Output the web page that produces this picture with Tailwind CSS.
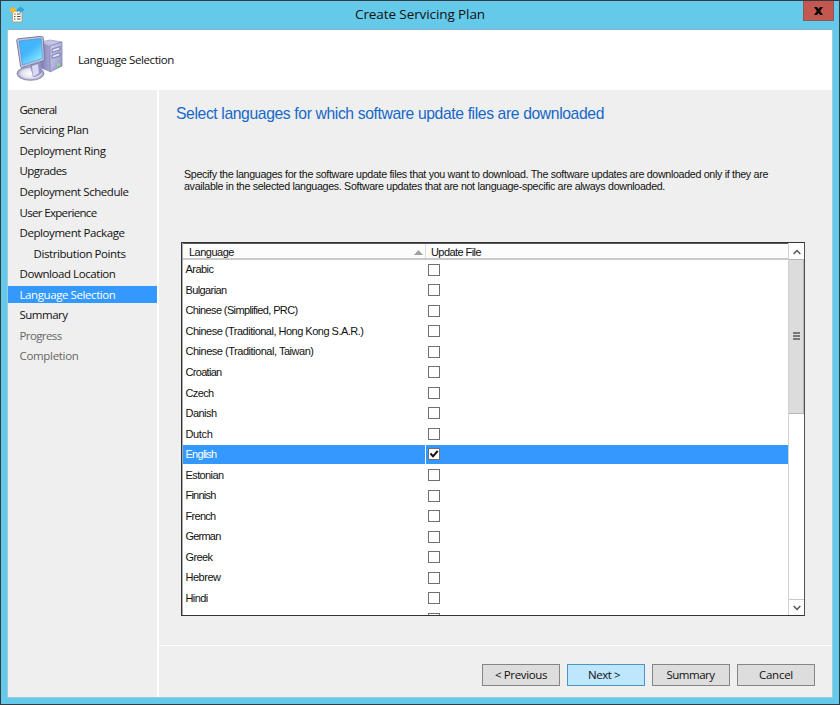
<!DOCTYPE html>
<html lang="en">
<head>
<meta charset="utf-8">
<title>Create Servicing Plan</title>
<script src="https://cdn.jsdelivr.net/npm/@tailwindcss/browser@4"></script>
</head>
<body class="w-[840px] h-[705px] overflow-hidden bg-[#333b45] font-['Open_Sans','Noto_Sans',sans-serif] text-[11.5px] text-[#111] whitespace-nowrap">
<div class="w-[840px] h-[705px] border border-[#353b43] bg-[#65c9e9] flex flex-col">
  <header class="h-[28px] shrink-0 flex items-start relative">
    <svg class="ml-[8px] mt-[5px]" width="17" height="17" viewBox="0 0 17 17">
      <path d="M3.500 4.500h9.500v11.500h-9.500z" fill="#fffaf0" stroke="#a8977c" stroke-width=".8"/>
      <path d="M5 8h1.500M5 10.500h1.500M5 13h1.500M8 8h3.500M8 10.500h3.500M8 13h3.500" stroke="#555" stroke-width="1.200"/>
      <path d="M3.800 0l1 2.500L7.500 1.800 6.200 4l1.600 2-2.700-.3L3.800 8 2.700 5.600 0 5.800 1.600 3.800.4 1.500l2.500.8z" fill="#f5b52c"/>
      <path d="M8 6c.3-3 1.500-4 3-4V.8L15 3.800l-4 3V5C10 4.700 9 5 8 6z" fill="#30a9dd" stroke="#2488bd" stroke-width=".5"/>
    </svg>
    <div class="absolute left-[354px] top-[3px] leading-[20px] text-[13.5px]"><span data-w="130">Create Servicing Plan</span></div>
    <div class="absolute left-[802px] top-0 w-[31px] h-[20px] border border-t-0 border-[#87595b] bg-[#c4574f] flex items-center justify-center">
      <svg width="9" height="8" viewBox="0 0 9 8"><path d="M0 0h3l1.500 2L6 0h3L6.200 4 9 8H6L4.500 6 3 8H0l2.800-4z" fill="#080808"/></svg>
    </div>
  </header>
  <main class="ml-[6px] w-[826px] h-[669px] shrink-0 border-l border-t border-r border-b border-[#9ccbdc] border-t-[#83b3d2] bg-[#efefef] flex flex-col">
    <div class="h-[60px] shrink-0 bg-white flex items-center">
      <svg class="ml-[8px] mt-[2px]" width="50" height="50" viewBox="0 0 50 50">
        <defs>
          <linearGradient id="scr" x1="0" y1="0" x2=".7" y2="1"><stop offset="0" stop-color="#42b4ff"/><stop offset=".5" stop-color="#42b5fb"/><stop offset="1" stop-color="#8bebff"/></linearGradient>
          <linearGradient id="front" x1="0" y1="0" x2="1" y2="1"><stop offset="0" stop-color="#d9d8f4"/><stop offset="1" stop-color="#8f8fc4"/></linearGradient>
          <linearGradient id="side" x1="0" y1="0" x2="1" y2="0"><stop offset="0" stop-color="#7778ad"/><stop offset="1" stop-color="#a9a9d8"/></linearGradient>
          <radialGradient id="foot"><stop offset="0" stop-color="#fff"/><stop offset=".7" stop-color="#dedfef"/><stop offset="1" stop-color="#9293b6"/></radialGradient>
        </defs>
        <path d="M25 6L34 4 46 6 35 10z" fill="#c4c5e8" stroke="#8989b5" stroke-width=".6"/>
        <path d="M24 6L34 10v26l-10-4z" fill="url(#side)"/>
        <path d="M34 10L46 6v24L34 36z" fill="url(#front)" stroke="#7778aa" stroke-width=".7"/>
        <path d="M36 13l8-2.500v3.500l-8 2.500zM36 19l8-2.500v3.500l-8 2.500z" fill="#b9b9e2" stroke="#777aab" stroke-width=".8"/>
        <path d="M37 14.500l6-2M37 20.500l6-2" stroke="#fff" stroke-width=".9"/>
        <circle cx="42.500" cy="28.500" r="1.600" fill="#83e957"/>
        <ellipse cx="14.500" cy="37.500" rx="13.500" ry="6.800" fill="url(#foot)" stroke="#8b8bab" stroke-width=".9"/>
        <path d="M14 29l11-3 1 10c-2 3-6 5-9 5z" fill="#8f91c5"/>
        <path d="M16 30l6-2 1 9c-2 2-4 3-6 3z" fill="#d8d9f1"/>
        <path d="M.7 4.500Q.7 3 2.200 2.800L25 .3Q27 .2 27.200 1.700L28.500 23q0 1.500-1.500 2L6.500 31.500Q5 31.800 4.600 30.500z" fill="#bfc2dc" stroke="#70739b" stroke-width=".9"/>
        <path d="M3 5L25 2.500 26.500 22.500 6.500 29z" fill="url(#scr)" stroke="#4a8bd2" stroke-width=".6"/>
      </svg>
      <div class="ml-[12px] -mt-px"><span data-w="96">Language Selection</span></div>
    </div>
    <div class="flex flex-1 min-h-0">
      <nav id="nav" class="w-[151px] shrink-0 border-r-2 border-white pt-[9px]"></nav>
      <section class="flex-1 min-w-0 flex flex-col font-['Liberation_Sans',Arial,sans-serif]">
        <div class="h-[556px] shrink-0 border-b border-white">
          <h1 class="pt-[14px] pl-[17px] text-[15.7px] leading-[20px] text-[#1668c8]"><span data-w="428">Select languages for which software update files are downloaded</span></h1>
          <div class="mt-[44px] pl-[25px] text-[10.7px] leading-[12px]">
            <div><span data-w="584">Specify the languages for the software update files that you want to download. The software updates are downloaded only if they are</span></div>
            <div><span data-w="481">available in the selected languages. Software updates that are not language-specific are always downloaded.</span></div>
          </div>
          <div class="mt-[50px] ml-[22px] w-[624px] h-[374px] border border-[#333] border-r-[#505050] shadow-[inset_1px_1px_0_#aaa] bg-white flex overflow-hidden">
            <div class="w-[606px] h-full pl-px overflow-hidden">
              <div class="h-[17px] bg-[#fcfcfc] border-t border-[#555] border-b-2 border-b-[#c9c9c9] flex text-[11px] leading-[17px]">
                <div class="w-[243px] border-r border-[#ddd] pl-[6px] pr-[2px] flex items-start justify-between"><span data-w="45">Language</span>
                  <svg class="mt-[6px]" width="9" height="5" viewBox="0 0 9 5"><path d="M4.500 0L9 5H0z" fill="#a0a0a0"/></svg>
                </div>
                <div class="pl-[5px]"><span data-w="50">Update File</span></div>
              </div>
              <div id="rows"></div>
            </div>
            <div class="w-[16px] h-full border-l border-[#d2d2d2] bg-white flex flex-col">
              <div class="h-[16px] shrink-0 flex items-center justify-center"><svg class="mt-[2px]" width="8" height="6" viewBox="0 0 8 6"><path d="M.7 5L4 1.500 7.300 5" fill="none" stroke="#555" stroke-width="1.500"/></svg></div>
              <div class="h-[155px] shrink-0 bg-[#dcdcdc] border border-l-0 border-[#b5b5b5] flex flex-col items-center justify-center gap-px pb-[2px]">
                <i class="block w-[7px] h-[2px] bg-[#777]"></i><i class="block w-[7px] h-[2px] bg-[#777]"></i><i class="block w-[7px] h-[2px] bg-[#777]"></i>
              </div>
              <div class="flex-1"></div>
              <div class="h-[16px] shrink-0 border-t border-[#c8c8c8] flex items-center justify-center"><svg width="8" height="6" viewBox="0 0 8 6"><path d="M.7 1L4 4.500 7.300 1" fill="none" stroke="#555" stroke-width="1.500"/></svg></div>
            </div>
          </div>
        </div>
        <footer class="flex justify-end gap-[7px] pt-[18px] pr-[17px] font-['Open_Sans','Noto_Sans',sans-serif]">
          <div class="w-[78px] h-[22px] border border-[#858585] bg-[#dddddd] flex items-center justify-center"><span data-w="52">&lt; Previous</span></div>
          <div class="w-[78px] h-[22px] border border-[#4b94cc] bg-[#bee6fd] flex items-center justify-center pr-[4px]"><span data-w="32">Next &gt;</span></div>
          <div class="w-[78px] h-[22px] border border-[#858585] bg-[#dddddd] flex items-center justify-center pr-[1px]"><span data-w="48">Summary</span></div>
          <div class="w-[78px] h-[22px] border border-[#858585] bg-[#dddddd] flex items-center justify-center"><span data-w="34">Cancel</span></div>
        </footer>
      </section>
    </div>
  </main>
</div>
<script>
const steps = [['General',37],['Servicing Plan',69],['Deployment Ring',86],['Upgrades',47],['Deployment Schedule',109],['User Experience',77],['Deployment Package',105],['Distribution Points',92,'pl-[25.5px]'],['Download Location',96],['Language Selection',96,'','text-white bg-[#3399ff]'],['Summary',48],['Progress',42,'','text-[#666]'],['Completion',59,'','text-[#666]']];
document.getElementById('nav').innerHTML = steps.map(([t,w,pad,tone]) =>
  `<div class="h-[20.55px] flex items-center"><div class="w-full h-[17px] leading-[18.5px] ${pad || 'pl-[11.5px]'} ${tone || ''}"><span data-w="${w}">${t}</span></div></div>`).join('');
const langs = [['Arabic',28],['Bulgarian',41],['Chinese (Simplified, PRC)',112],['Chinese (Traditional, Hong Kong S.A.R.)',178],['Chinese (Traditional, Taiwan)',128],['Croatian',36],['Czech',28],['Danish',31],['Dutch',27],['English',31],['Estonian',38],['Finnish',30],['French',30],['German',35],['Greek',27],['Hebrew',35],['Hindi',22],['Hungarian',45]];
document.getElementById('rows').innerHTML = langs.map(([t,w]) => {
  const on = t === 'English';
  return `<div class="h-[20.55px] pb-[1px] flex text-[11px]"><div class="w-[242px] pl-[2.5px] pb-[0.5px] flex items-center ${on ? 'bg-[#3399ff] text-white' : ''}"><span data-w="${w}">${t}</span></div><div class="flex-1 ml-px pl-[2px] pb-[0.5px] flex items-center ${on ? 'bg-[#3399ff]' : ''}"><svg class="bg-white" width="12" height="12" viewBox="0 0 12 12"><rect x=".5" y=".5" width="11" height="11" fill="none" stroke="#707070"/>${on ? '<path d="M2.500 5.500L5 8.300 9.700 3" fill="none" stroke="#111" stroke-width="2"/>' : ''}</svg></div></div>`;
}).join('');
// Letter spacing is derived from each label's intended width.
function fitLabels() {
  document.querySelectorAll('[data-w]').forEach(el => {
    el.style.letterSpacing = '0px';
    el.style.letterSpacing = (el.dataset.w - el.getBoundingClientRect().width) / el.textContent.length + 'px';
  });
}
fitLabels();
window.addEventListener('load', () => { fitLabels(); requestAnimationFrame(fitLabels); });
document.fonts.ready.then(fitLabels);
</script>
</body>
</html>
